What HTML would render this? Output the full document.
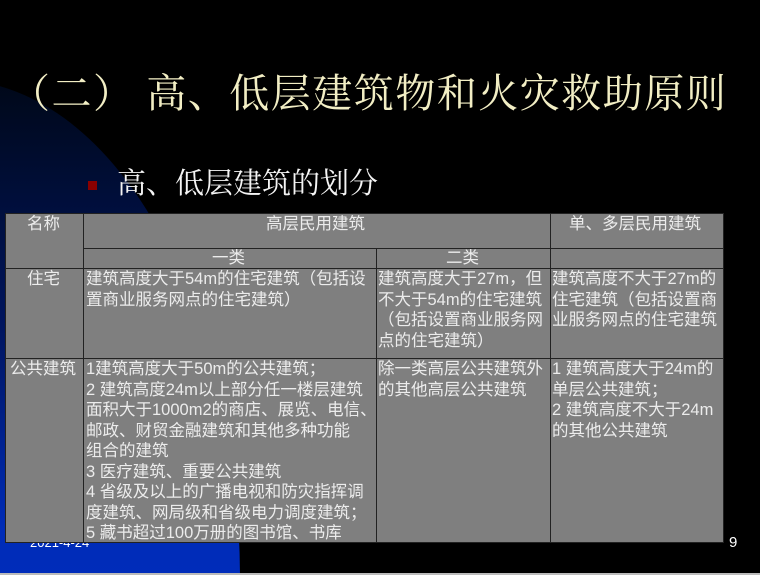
<!DOCTYPE html>
<html><head><meta charset="utf-8"><style>
html,body{margin:0;width:760px;height:575px;overflow:hidden}
body{background:#000;font-family:"Liberation Sans","Noto Sans CJK SC",sans-serif}
.wrap{position:relative;width:760px;height:575px;overflow:hidden}
.blue{position:absolute;left:-330px;top:80px;width:570px;height:1000px;border-radius:50%;background:linear-gradient(180deg,#000818 0%,#001560 25%,#002cb8 45%,#0033cc 100%)}
.title{position:absolute;left:10px;top:62px;font-size:40px;color:#f2eec4;font-family:"Noto Serif CJK SC","Noto Sans CJK SC",serif;white-space:nowrap;letter-spacing:1.5px}
.sub{position:absolute;left:117px;top:161px;font-size:29px;color:#f4f4f4;font-family:"Noto Serif CJK SC","Noto Sans CJK SC",serif;white-space:nowrap}
.bul{position:absolute;left:88px;top:181px;width:9px;height:9px;background:#8a0000}
.tb{position:absolute;left:5px;top:213px;width:719px;height:330px;background:#7f7f7f;border:1px solid #222;box-sizing:border-box}
.l{position:absolute;background:#222}
.c{position:absolute;color:#ececec;font-size:16.5px;line-height:20.5px;white-space:nowrap}
.date{position:absolute;left:30px;top:535px;color:#fff;font-size:13px}
.num{position:absolute;left:729px;top:534px;color:#fff;font-size:15px}
.bot{position:absolute;left:0;top:573px;width:760px;height:2px;background:#bbb}
</style></head><body><div class="wrap">
<div class="blue"></div>
<div class="title">（二） 高、低层建筑物和火灾救助原则</div>
<div class="bul"></div>
<div class="sub">高、低层建筑的划分</div>
<div class="date">2021-4-24</div>
<div class="tb"></div>
<div class="l" style="left:83px;top:213px;width:1px;height:330px"></div>
<div class="l" style="left:376px;top:248px;width:1px;height:295px"></div>
<div class="l" style="left:550px;top:213px;width:1px;height:330px"></div>
<div class="l" style="left:83px;top:248px;width:641px;height:1px"></div>
<div class="l" style="left:5px;top:268px;width:719px;height:1px"></div>
<div class="l" style="left:5px;top:358px;width:719px;height:1px"></div>
<div class="c" style="left:27px;top:214px">名称</div>
<div class="c" style="left:266px;top:214px">高层民用建筑</div>
<div class="c" style="left:569px;top:214px">单、多层民用建筑</div>
<div class="c" style="left:212px;top:248px">一类</div>
<div class="c" style="left:446px;top:248px">二类</div>
<div class="c" style="left:27px;top:269px">住宅</div>
<div class="c" style="left:86px;top:269px">建筑高度大于54m的住宅建筑（包括设<br>置商业服务网点的住宅建筑）</div>
<div class="c" style="left:378px;top:269px">建筑高度大于27m，但<br>不大于54m的住宅建筑<br>（包括设置商业服务网<br>点的住宅建筑）</div>
<div class="c" style="left:552px;top:269px">建筑高度不大于27m的<br>住宅建筑（包括设置商<br>业服务网点的住宅建筑</div>
<div class="c" style="left:10px;top:359px">公共建筑</div>
<div class="c" style="left:86px;top:359px">1建筑高度大于50m的公共建筑；<br>2 建筑高度24m以上部分任一楼层建筑<br>面积大于1000m2的商店、展览、电信、<br>邮政、财贸金融建筑和其他多种功能<br>组合的建筑<br>3 医疗建筑、重要公共建筑<br>4 省级及以上的广播电视和防灾指挥调<br>度建筑、网局级和省级电力调度建筑；<br>5 藏书超过100万册的图书馆、书库</div>
<div class="c" style="left:378px;top:359px">除一类高层公共建筑外<br>的其他高层公共建筑</div>
<div class="c" style="left:552px;top:359px">1 建筑高度大于24m的<br>单层公共建筑；<br>2 建筑高度不大于24m<br>的其他公共建筑</div>
<div class="num">9</div>
<div class="bot"></div>
</div></body></html>
